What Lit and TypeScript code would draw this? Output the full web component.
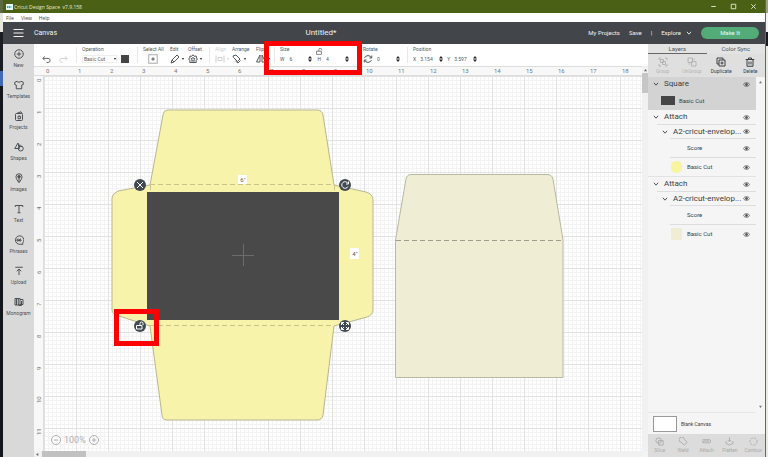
import { LitElement, html, css, svg, nothing, SVGTemplateResult, TemplateResult } from "lit";
import { customElement } from "lit/decorators.js";
import { classMap } from "lit/directives/class-map.js";

const icon = (body: SVGTemplateResult, cls = "ico") =>
  html`<svg class=${cls} viewBox="0 0 20 20" aria-hidden="true">${body}</svg>`;

const shapes: Record<string, SVGTemplateResult> = {
  fresh: svg`<circle cx="10" cy="10" r="8.5"/><path d="M10 5.5v9M5.5 10h9"/>`,
  templates: svg`<path d="M6 2.5C7 5 13 5 14 2.5l4.5 2V9l-3 1v7.500h-11V10L1.500 9V4.500z"/>`,
  projects: svg`<rect x="3" y="5" width="14" height="14" rx="2"/><path d="M5 5l9-3.500 2 3.500M8 10.500h5v5H8zM10.500 9v2"/>`,
  shapes: svg`<path d="M8 2L1.500 13h9.500zM8 7l5-1"/><circle cx="13.500" cy="13" r="5"/><path d="M9 8l7 1"/>`,
  images: svg`<path d="M10 19.500C7 15 4 11.500 4 7.500a6 6 0 0 1 12 0c0 4-3 7.500-6 12z"/><circle cx="10" cy="7.500" r="2.500" fill="currentColor"/><path d="M10 9v9"/>`,
  text: svg`<path d="M2.500 6V3h15v3M10 3v14M7 17.500h6"/>`,
  phrases: svg`<path d="M17 16.500A8.500 8.500 0 1 0 13 18.500h5z"/><path d="M6 12V9.500h3V12zM11 12V9.500h3V12zM6 9.500l2-2.500M11 9.500l2-2.500"/>`,
  upload: svg`<path d="M2.500 2.500h15M10 18V6.500M5.500 10.500L10 6l4.500 4.500"/>`,
  monogram: svg`<path d="M2 3h10v13H2zM5 3v13M8.500 3v13M12 5h6v10h-6M15 8v9H9"/>`,
  undo: svg`<path d="M6 3L2 7.500 6 12M2 7.500h11.500a4.500 4.500 0 0 1 0 9H10"/>`,
  redo: svg`<path d="M14 3l4 4.500-4 4.500M18 7.500H6.500a4.500 4.500 0 0 0 0 9H8"/>`,
  selectAll: svg`<rect x="1.500" y="1.500" width="17" height="17" stroke="#aaa"/><path d="M10 6.500v7M6.500 10h7"/>`,
  edit: svg`<path d="M2 18l2-6L14 2l4 4L8 16zM4 12l4 4"/>`,
  offset: svg`<path d="M10 1.500l2.500 3 4-.5.5 4 2 2.500-3 2 .5 4.500H3.500L4 12.500 1 10l2.500-2L4 4l3.500.5z"/><path d="M10 6.500l1.500 2.500 2.500.5-2 2 .5 3-2.500-1-2.500 1 .5-3-2-2 2.500-.5z"/>`,
  align: svg`<path d="M2 3v14M18 3v14M6 7h8v6H6z"/>`,
  arrange: svg`<path d="M2 4l6-2 8 8-5 5-8-8zM7 14l5 4 5-5"/>`,
  flip: svg`<path d="M8 2v14H1zM12 2v14h7z"/>`,
  lock: svg`<rect x="2" y="9" width="13" height="9"/><path d="M8 9V5a4 4 0 0 1 8 0v1"/>`,
  rotate: svg`<path d="M3 8a7.500 7.500 0 0 1 14 0M17 12a7.500 7.500 0 0 1-14 0M17.500 3v5h-4.500M2.500 17v-5H7"/>`,
  group: svg`<path d="M2 6V2h4M14 2h4v4M18 14v4h-4M6 18H2v-4"/><path d="M5 5h6v6H5zM9 9h6v6H9z"/>`,
  ungroup: svg`<path d="M2 2h9v9H2zM9 9h9v9H9zM14 3v3M3 14h3"/>`,
  duplicate: svg`<path d="M6 14H2V2h12v4"/><path d="M6 6h12v12H6z"/><path d="M12 9v6M9 12h6"/>`,
  trash: svg`<path d="M1.500 5h17M4 5v13.500h12V5M7 5V2h6v3M8 9v6M12 9v6"/>`,
  slice: svg`<circle cx="8" cy="8" r="6"/><path d="M8 8h10v10H8z"/>`,
  weld: svg`<path d="M12 5A6 6 0 1 0 5 12l7 6 6-6z"/>`,
  attach: svg`<path d="M3 6h13a3.500 3.500 0 0 1 0 7H5a2 2 0 0 1 0-4h11M3 6a3.500 3.500 0 0 0 0 7"/>`,
  flatten: svg`<path d="M10 1v9M6.500 7L10 10.500 13.500 7M3 9l-1 5 8 4 8-4-1-5"/>`,
  contour: svg`<circle cx="10" cy="10" r="8" stroke-dasharray="5 2.500"/>`,
  eye: svg`<path d="M1 10c4-7 14-7 18 0-4 7-14 7-18 0z"/><circle cx="10" cy="10" r="3" fill="currentColor"/>`,
  chevron: svg`<path d="M3 6l7 8 7-8"/>`,
  minus: svg`<circle cx="10" cy="10" r="9"/><path d="M6 10h8"/>`,
  plus: svg`<circle cx="10" cy="10" r="9"/><path d="M6 10h8M10 6v8"/>`,
  burger: svg`<path d="M0 3h20M0 10h20M0 17h20"/>`,
};

const base = css`
  * { box-sizing: border-box; }
  button, input, select {
    font: inherit; color: inherit; background: none; border: 0; padding: 0; margin: 0;
    appearance: none; border-radius: 0;
  }
  button { display: flex; align-items: center; justify-content: center; line-height: inherit; white-space: nowrap; }
  a { color: inherit; text-decoration: none; }
  svg { display: block; flex: none; fill: none; stroke: currentColor; stroke-width: 2; }
  .ico { width: 10px; height: 10px; }
  .tiny { width: 6px; height: 6px; stroke-width: 3; }
`;

@customElement("edit-toolbar")
export class EditToolbar extends LitElement {
  static styles = [base, css`
    :host {
      display: grid; position: relative; z-index: 2; height: 22px; background: #fff; color: #55585b;
      grid-template-columns: 48px 61px 27px 18px 27px 17px 24px 24px 83px 50px 1fr;
      font-size: 5px; line-height: 8px;
    }
    .cell { display: flex; flex-direction: column; padding-top: 1px; min-width: 0; position: relative; white-space: nowrap; }
    .sep::after { content: ""; position: absolute; right: 5px; top: 3px; bottom: 3px; width: 1px; background: #e9e9e9; }
    .row { display: flex; align-items: center; justify-content: flex-start; height: 11px; gap: 2px; }
    .inset .row { padding-left: 5px; }
    .history { gap: 8px; padding: 8px 0 0 8px; flex-direction: row; }
    .history .ico { width: 9px; height: 9px; }
    .off { color: #cfcfcf; }
    .pick { display: flex; align-items: center; width: 35px; height: 8px; border: 1px solid #eee; position: relative; }
    .pick select { width: 100%; line-height: 6px; padding-left: 1px; font-size: 5px; }
    .caret { width: 0; height: 0; border: 1px solid transparent; border-top: 2px solid #222; border-bottom: 0; flex: none; }
    .off .caret { border-top-color: #cfcfcf; }
    .swatch { width: 8px; height: 8px; background: #454545; margin-left: 2px; }
    .grow { gap: 4px; }
    .field { display: flex; align-items: center; gap: 3px; }
    .field input { width: 18px; height: 8px; padding-left: 2px; font-size: 5px; }
    .field.narrow input { width: 17px; padding-left: 1px; }
    .spin { width: 4px; height: 6px; fill: #222; stroke: none; }
    .sizes { gap: 5px; }
    .lockbtn { position: absolute; left: 36px; top: 4px; }
    .lockbtn .ico { width: 7px; height: 7px; }
    .mark { position: absolute; left: -16px; top: -3px; width: 98px; height: 34px; border: 5px solid #fd0000; pointer-events: none; }
  `];

  private spin() {
    return html`<svg class="spin" viewBox="0 0 4 6" aria-hidden="true"><path d="M2 0L4 2.400H0zM2 6L0 3.600h4z"/></svg>`;
  }

  private field(label: string, value: string, narrow = false) {
    return html`<label class=${classMap({ field: true, narrow })}>${label}<input .value=${value} />${this.spin()}</label>`;
  }

  private tool(label: string, name: string, extra = "") {
    return html`<div class="cell ${extra}">
      <span>${label}</span>
      <button class="row" aria-label=${label}>${icon(shapes[name])}${name === "selectAll" ? nothing : html`<i class="caret"></i>`}</button>
    </div>`;
  }

  render() {
    return html`
      <div class="cell sep history">
        <button aria-label="Undo">${icon(shapes.undo)}</button>
        <button class="off" aria-label="Redo">${icon(shapes.redo)}</button>
      </div>
      <div class="cell sep">
        <label for="op">Operation</label>
        <div class="row">
          <div class="pick"><select id="op"><option>Basic Cut</option></select><i class="caret"></i></div>
          <button class="swatch" aria-label="Material colour"></button>
        </div>
      </div>
      ${this.tool("Select All", "selectAll", "inset")}
      ${this.tool("Edit", "edit")}
      ${this.tool("Offset", "offset", "sep")}
      ${this.tool("Align", "align", "off")}
      ${this.tool("Arrange", "arrange")}
      ${this.tool("Flip", "flip", "sep")}
      <div class="cell">
        <span>Size</span>
        <div class="row sizes">${this.field("W", "6")}${this.field("H", "4")}</div>
        <button class="lockbtn" aria-label="Unlock proportions">${icon(shapes.lock)}</button>
        <div class="mark"></div>
      </div>
      <div class="cell sep">
        <span>Rotate</span>
        <div class="row">${icon(shapes.rotate)}<label class="field"><input aria-label="Rotate" .value=${"0"} />${this.spin()}</label></div>
      </div>
      <div class="cell">
        <span>Position</span>
        <div class="row grow">${this.field("X", "3.154", true)}${this.field("Y", "3.597", true)}</div>
      </div>`;
  }
}

@customElement("design-canvas")
export class DesignCanvas extends LitElement {
  static styles = [base, css`
    :host {
      display: grid; position: relative; min-width: 0; min-height: 0; overflow: hidden; color: #777;
      grid-template: 10px minmax(0, 1fr) 6px / 10px minmax(0, 1fr) 6px; font-size: 6px; line-height: 8px; background: #f3f3f3;
    }
    .ruler { display: flex; overflow: hidden; background: #f8f8f8; }
    .across { grid-column: 1 / 3; padding-left: 11px; border-top: 1px solid #ddd; border-bottom: 1px solid #ddd; }
    .down { flex-direction: column; border-right: 1px solid #ddd; }
    .tick { flex: none; width: 32px; padding-left: 1px; }
    .tick:last-child { width: auto; }
    .down .tick { width: auto; height: 32px; padding: 0 0 0 1px; }
    .down .tick:last-child { height: auto; }
    .down span { display: block; writing-mode: vertical-rl; rotate: 180deg; width: 7px; height: 8px; text-align: center; line-height: 7px; }
    .stage {
      position: relative; overflow: hidden; background-color: #fefefe;
      background-image:
        linear-gradient(90deg, #e2e2e2 1px, transparent 1px),
        linear-gradient(#e2e2e2 1px, transparent 1px),
        linear-gradient(90deg, #f3f3f3 1px, transparent 1px),
        linear-gradient(#f3f3f3 1px, transparent 1px);
      background-size: 32px 32px, 32px 32px, 4px 4px, 4px 4px;
    }
    .art { position: absolute; left: 0; top: 0; width: 100%; height: 100%; stroke: none; stroke-width: 1; }
    .env { fill: #f7f3ab; stroke: #b9b790; }
    .card { fill: #efedd3; stroke: #b9b8a4; }
    .score { stroke: #c9c58a; stroke-dasharray: 5 3; }
    .score.plain { stroke: #9f9e8c; }
    .square { fill: #494949; }
    .cross { stroke: #6c6c6c; }
    .tag { fill: #fff; }
    .dim { fill: #555; font-size: 6px; text-anchor: middle; }
    .knob { fill: #414a52; }
    .glyph { stroke: #fff; }
    .mark { fill: none; stroke: #fd0000; stroke-width: 5; }
    .zoom { position: absolute; left: 7px; bottom: 6px; display: flex; align-items: center; gap: 3px; color: #b0b0b0; font-size: 9px; line-height: 10px; }
    .vbar, .hbar { display: flex; overflow: hidden; }
    .vbar { grid-column: 3; grid-row: 1 / 3; flex-direction: column; align-items: center; background: #f1f1f1; gap: 1px; padding-top: 3px; }
    .vbar i { width: 6px; height: 20px; background: #c6c6c6; }
    .hbar { grid-column: 1 / 3; align-items: center; background: #f1f1f1; gap: 3px; padding-left: 2px; }
    .hbar i { width: 44px; height: 6px; background: #c1c1c1; }
    .arrow { width: 3px; height: 3px; fill: #666; stroke: none; }
  `];

  private inches = (count: number) => Array.from({ length: count }, (_, i) => i);

  private knob(x: number, y: number, glyph: string) {
    return svg`<g transform="translate(${x} ${y})"><circle class="knob" r="6"/><path class="glyph" fill="none" d=${glyph}/></g>`;
  }

  render() {
    return html`
      <div class="ruler across">${this.inches(19).map((n) => html`<span class="tick">${n}</span>`)}</div>
      <div class="ruler down">${this.inches(12).map((n) => html`<div class="tick"><span>${n}</span></div>`)}</div>
      <div class="stage">
        <svg class="art" role="img" aria-label="Envelope design">
          <path class="env" d="M124 34H273Q278 34 279 39L290 109L322 116Q329 118 329 124V234Q329 239 323 241L290 250L279 339Q278 344 273 344H123Q118 344 118 339L106 250L75 240Q68 238 68 234V122Q68 118 74 115L106 109L119 39Q120 34 124 34Z"/>
          <path class="score" d="M106 108.500H290M106 249.500H290"/>
          <path class="score" d="M106.500 109V116M290.500 109V116"/>
          <path class="square" d="M103 116H295V244H103z"/>
          <path class="cross" d="M188 179.500H210M199.500 168V190"/>
          <path class="tag" d="M194 99h9v9h-9zM306 172h9v11h-9z"/>
          <text class="dim" x="199" y="106">6"</text>
          <text class="dim" x="311" y="180">4"</text>
          ${this.knob(96, 109, "M-3-3L3 3M3-3L-3 3")}
          ${this.knob(301, 109, "M3-1.500A3.300 3.300 0 1 0 3 1.500M3.500-3.500V-1H1")}
          ${this.knob(96, 250, "M-3.500-.500H2V3H-3.500zM0-.500V-2.500A1.500 1.500 0 0 1 3-2.500V-1")}
          ${this.knob(301, 250, "M-3-3L-1-1M3-3L1-1M-3 3L-1 1M3 3L1 1M-3.500-1V-3.500H-1M1-3.500H3.500V-1M3.500 1V3.500H1M-1 3.500H-3.500V1")}
          <path class="card" d="M371 98.500H503Q508 98.500 509 103L519 164V301.500H351.500V164L362 103Q363 98.500 367 98.500z"/>
          <path class="score plain" d="M352 164.500H519"/>
          <rect class="mark" x="72.500" y="235.500" width="40" height="32"/>
        </svg>
        <div class="zoom">
          <button aria-label="Zoom out">${icon(shapes.minus)}</button><span>100%</span><button aria-label="Zoom in">${icon(shapes.plus)}</button>
        </div>
      </div>
      <div class="vbar"><svg class="arrow" viewBox="0 0 4 4"><path d="M2 0l2 3H0z"/></svg><i></i></div>
      <div class="hbar"><svg class="arrow" viewBox="0 0 4 4"><path d="M0 2l3-2v4z"/></svg><i></i></div>`;
  }
}

@customElement("layers-panel")
export class LayersPanel extends LitElement {
  static styles = [base, css`
    :host { display: flex; flex-direction: column; background: #f5f5f5; color: #3b3e41; min-height: 0; font-size: 6px; line-height: 8px; }
    .tabs { display: grid; grid-template-columns: 1fr 1fr; background: #e3e3e3; height: 10px; }
    .tabs button { border-bottom: 1px solid #e3e3e3; color: #555; }
    .tabs .on { border-bottom-color: #666; }
    .acts { display: grid; grid-template-columns: repeat(4, 1fr); background: #dfdfdf; height: 23px; font-size: 5px; line-height: 7px; }
    .acts button { flex-direction: column; gap: 1px; }
    .acts .ico { width: 10px; height: 10px; }
    .off { color: #b4b4b4; }
    .list { flex: 1; display: grid; grid-template-columns: minmax(0, 1fr) 9px; min-height: 0; overflow: hidden; }
    .rail { display: flex; flex-direction: column; justify-content: space-between; align-items: center; padding: 4px 0; }
    .arrow { width: 3px; height: 3px; fill: #777; stroke: none; }
    .group { padding-bottom: 1px; }
    .attached + .attached { box-shadow: 0 -1px #e2e2e2; }
    .picked { background: #d3d3d3; padding: 0; }
    .row { display: flex; align-items: center; padding-right: 6px; gap: 5px; }
    .row .name { flex: 1; min-width: 0; white-space: nowrap; }
    .head { height: 14px; padding-left: 5px; font-size: 8px; line-height: 10px; }
    .sub { margin-left: 9px; }
    .leaf { height: 19px; margin-left: 22px; padding-left: 1px; border-top: 1px solid #ddd; }
    .line { border-top: 1px solid #ddd; }
    .picked .leaf { margin-left: 13px; padding-left: 0; border: 0; gap: 4px; }
    .chip { width: 11px; height: 12px; flex: none; }
    .dark { width: 14px; height: 9px; background: #454545; }
    .yellow { background: #f8f4a0; border-radius: 5px; }
    .cream { background: #efedd3; }
    .eye { width: 7px; height: 7px; color: #4c4c4c; }
    .blank { display: flex; align-items: center; gap: 4px; height: 22px; padding-left: 5px; margin-right: 9px; border-top: 1px solid #e6e6e6; font-size: 5px; }
    .paper { width: 24px; height: 16px; border: 1px solid #999; background: #fff; }
    .foot { display: grid; grid-template-columns: repeat(5, 1fr); height: 23px; background: #dcdcdc; color: #aaa; font-size: 5px; line-height: 7px; }
    .foot button { flex-direction: column; gap: 1px; }
    .foot .ico { width: 9px; height: 9px; }
  `];

  private eye() {
    return html`<button aria-label="Toggle visibility">${icon(shapes.eye, "eye")}</button>`;
  }

  private head(name: string, sub = false) {
    return html`<div class=${classMap({ row: true, head: true, sub, line: sub })}>
      ${icon(shapes.chevron, "tiny")}<span class="name">${name}</span>${this.eye()}
    </div>`;
  }

  private leaf(name: string, chip: string) {
    return html`<div class="row leaf"><i class="chip ${chip}"></i><span class="name">${name}</span>${this.eye()}</div>`;
  }

  private attached(chip: string): TemplateResult {
    return html`<section class="group attached">
      ${this.head("Attach")}${this.head("A2-cricut-envelop...", true)}
      ${this.leaf("Score", "")}${this.leaf("Basic Cut", chip)}
    </section>`;
  }

  render() {
    return html`
      <div class="tabs"><button class="on">Layers</button><button>Color Sync</button></div>
      <div class="acts">
        <button class="off">${icon(shapes.group)}Group</button>
        <button class="off">${icon(shapes.ungroup)}UnGroup</button>
        <button>${icon(shapes.duplicate)}Duplicate</button>
        <button>${icon(shapes.trash)}Delete</button>
      </div>
      <div class="list">
        <div>
          <section class="group picked">
            ${this.head("Square")}
            <div class="row leaf"><i class="chip dark"></i><span class="name">Basic Cut</span></div>
          </section>
          ${this.attached("yellow")}
          ${this.attached("cream")}
        </div>
        <div class="rail">
          <svg class="arrow" viewBox="0 0 4 4"><path d="M2 0l2 3H0z"/></svg>
          <svg class="arrow" viewBox="0 0 4 4"><path d="M2 4L0 1h4z"/></svg>
        </div>
      </div>
      <div class="blank"><i class="paper"></i><span>Blank Canvas</span></div>
      <div class="foot">
        ${[["slice", "Slice"], ["weld", "Weld"], ["attach", "Attach"], ["flatten", "Flatten"], ["contour", "Contour"]].map(
          ([name, label]) => html`<button>${icon(shapes[name])}${label}</button>`
        )}
      </div>`;
  }
}

@customElement("app-root")
export class AppRoot extends LitElement {
  static styles = [base, css`
    :host {
      display: grid; height: 100vh; grid-template: 13px 9px 22px minmax(0, 1fr) / 100%; padding: 0 3px;
      box-sizing: border-box; overflow: hidden;
      font-family: Roboto, "Liberation Sans", sans-serif; font-size: 6px; line-height: 8px;
      background:
        linear-gradient(#9a9f86 13px, #f4f4f4 13px 32px, #16191d 32px 46px, #e9ece2 46px) right / 2px 100% no-repeat,
        linear-gradient(#5d6940 13px, #e6e8e0 13px 32px, #1a1d22 32px 71px, #4169b4 71px 86px, #14161d 86px) left / 3px 100% no-repeat,
        #5f7434;
    }
    .title { display: flex; align-items: center; gap: 1px; padding: 0 7px 0 3px; background: #4a6015; color: #e6ebd6; font-family: "Open Sans", sans-serif; font-size: 5px; }
    .logo { width: 7px; height: 6px; background: #e9f8f5; color: #2bb39b; }
    .title span { flex: 1; white-space: pre; }
    .win { display: flex; gap: 11px; }
    .win .ico { width: 9px; height: 9px; }
    .menu { display: flex; align-items: center; gap: 7px; padding-left: 3px; background: #fff; color: #444; font-family: "Open Sans", sans-serif; font-size: 5px; }
    .bar { display: grid; grid-template-columns: 9fr auto 13fr; align-items: center; background: #424549; color: #f2f2f2; padding: 0 6px 0 10px; }
    .side { display: flex; align-items: center; gap: 10px; font-size: 7px; }
    .burger { width: 11px; height: 10px; }
    .name { font-size: 8px; line-height: 10px; }
    .right { justify-content: flex-end; gap: 9px; font-size: 6px; }
    .right .drop { display: flex; align-items: center; gap: 5px; }
    .make { width: 58px; height: 12px; border-radius: 6px; background: #53ab78; color: #eefaf2; }
    .body { display: grid; grid-template-columns: 31px minmax(0, 1fr) 117px; min-height: 0; }
    .rail { display: flex; flex-direction: column; background: #d9d9d9; color: #4d5053; font-size: 5px; }
    .rail button { flex-direction: column; justify-content: flex-start; height: 31px; padding-top: 5px; gap: 2px; }
    .work { display: grid; grid-template-rows: 22px minmax(0, 1fr); min-width: 0; min-height: 0; }
  `];

  private tools = [
    ["fresh", "New"], ["templates", "Templates"], ["projects", "Projects"], ["shapes", "Shapes"], ["images", "Images"],
    ["text", "Text"], ["phrases", "Phrases"], ["upload", "Upload"], ["monogram", "Monogram"],
  ];

  render() {
    return html`
      <header class="title">
        <svg class="logo" viewBox="0 0 14 12" aria-hidden="true"><path d="M3 6h8M3 4v4M7 4v4"/></svg>
        <span>Cricut Design Space  v7.9.158</span>
        <div class="win">
          <button aria-label="Minimise">${icon(svg`<path d="M5 10h10"/>`)}</button>
          <button aria-label="Maximise">${icon(svg`<path d="M5 5h10v10H5z"/>`)}</button>
          <button aria-label="Close">${icon(svg`<path d="M5 5l10 10M15 5L5 15"/>`)}</button>
        </div>
      </header>
      <nav class="menu"><a href="#">File</a><a href="#">View</a><a href="#">Help</a></nav>
      <div class="bar">
        <div class="side"><button aria-label="Menu">${icon(shapes.burger, "burger")}</button><span>Canvas</span></div>
        <span class="name">Untitled*</span>
        <div class="side right">
          <a href="#">My Projects</a><a href="#">Save</a><span>|</span>
          <a class="drop" href="#">Explore ${icon(shapes.chevron, "tiny")}</a>
          <button class="make">Make It</button>
        </div>
      </div>
      <main class="body">
        <nav class="rail">
          ${this.tools.map(([name, label]) => html`<button>${icon(shapes[name])}${label}</button>`)}
        </nav>
        <div class="work"><edit-toolbar></edit-toolbar><design-canvas></design-canvas></div>
        <layers-panel></layers-panel>
      </main>`;
  }
}
